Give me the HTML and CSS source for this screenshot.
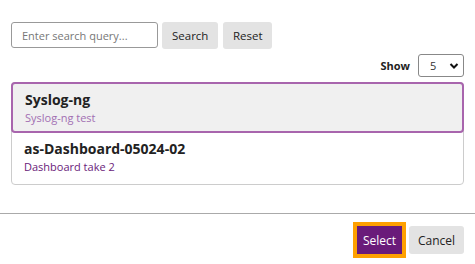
FILE: index.html
```html
<!DOCTYPE html>
<html>
<head>
<meta charset="utf-8">
<link rel="stylesheet" href="styles.css">
</head>
<body>
<div class="body">
  <div class="search-row">
    <input class="search-input" type="text" placeholder="Enter search query...">
    <button class="btn">Search</button>
    <button class="btn">Reset</button>
  </div>
  <div class="show-row">
    <span class="show-label">Show</span>
    <div class="select"><span>5</span>
      <svg class="chev" width="10" height="8" viewBox="0 0 10 8"><path d="M1.5 2 L5 5.5 L8.5 2" fill="none" stroke="#111" stroke-width="2"/></svg>
    </div>
  </div>
  <div class="list">
    <div class="item active">
      <div class="item-title">Syslog-ng</div>
      <div class="item-sub">Syslog-ng test</div>
    </div>
    <div class="item">
      <div class="item-title">as-Dashboard-05024-02</div>
      <div class="item-sub">Dashboard take 2</div>
    </div>
  </div>
</div>
<div class="footer">
  <button class="btn btn-primary">Select</button>
  <button class="btn btn-cancel">Cancel</button>
</div>
</body>
</html>
```
FILE: styles.css
```css
* { box-sizing: border-box; }
html, body { margin: 0; padding: 0; background: #fff; }
body { font-family: "Open Sans", "Liberation Sans", sans-serif; color: #222; width: 475px; height: 264px; overflow: hidden; }
.body { padding: 22px 11px 0 11px; height: 213px; }
.search-row { display: flex; align-items: flex-start; gap: 4px; }
.search-input {
  width: 147px; height: 26px; border: 1px solid #999; border-radius: 3px;
  padding: 0 10px; font-family: inherit; font-size: 11px; color: #333; outline: none;
}
.search-input::placeholder { color: #777; }
.btn {
  font-family: inherit; font-size: 12px; color: #222; background: #e3e3e3;
  border: none; border-radius: 3px; height: 27px; padding: 0 10px; cursor: pointer;
}
.search-row .btn { font-size: 11.5px; }
.search-row .btn:first-of-type { width: 56px; }
.search-row .btn:last-of-type { width: 49px; margin-left: 1px; }
.show-row { display: flex; justify-content: flex-end; align-items: center; gap: 8px; margin-top: 5px; padding-right: 0; }
.show-label { font-size: 11px; font-weight: 700; color: #222; }
.select {
  width: 46px; height: 23px; border: 1px solid #888; border-radius: 3px;
  display: flex; align-items: center; justify-content: space-between; padding: 0 4px 0 11px;
  font-size: 11px; color: #333;
}
.chev { display: block; }
.list { margin-top: 5px; border: 1px solid #ccc; border-radius: 4px; }
.item { padding: 6px 12px 6px 12px; height: 51px; }
.item.active {
  background: #f0f0f0; border: 2px solid #a865ad; border-radius: 4px;
  margin: -1px -1px 0 -1px; padding: 6px 11px 6px 12px; height: 51px;
}
.item-title { font-size: 14px; font-weight: 700; color: #222; line-height: 20px; }
.item-sub { font-size: 11px; color: #6a1b7a; line-height: 16px; margin-top: 0; }
.item.active .item-sub { color: #a26fb3; }
.footer {
  border-top: 1px solid #aaa; display: flex; justify-content: flex-end; gap: 5px;
  padding: 12px 11px 0 0;
}
.btn-primary {
  background: #6a1b7a; color: #fff; height: 28px; width: 45px; padding: 0;
  box-shadow: 0 0 0 4px #ffa000; border-radius: 0; margin-right: 2px;
}
.btn-cancel { height: 28px; width: 55px; padding: 0; }
```
